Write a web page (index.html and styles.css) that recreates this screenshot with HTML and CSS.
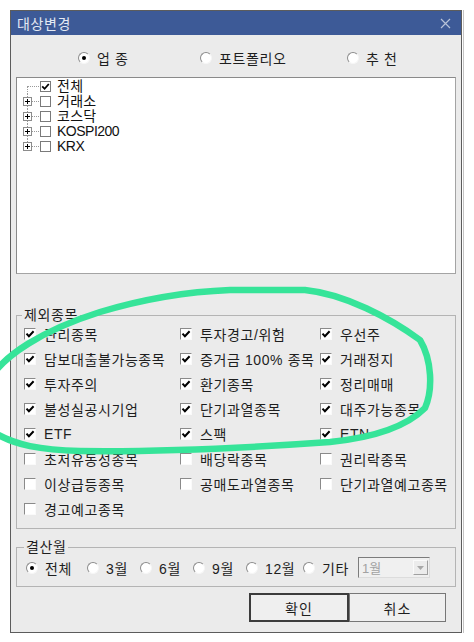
FILE: index.html
```html
<!DOCTYPE html>
<html lang="ko">
<head>
    <meta charset="UTF-8">
    <title>대상변경</title>
    <link rel="stylesheet" href="styles.css">
</head>
<body>

    <div class="screen">
        <!-- Dialog -->
        <div class="dialog">
            <div class="titlebar">
                <span class="title">대상변경</span>
                <svg class="close" width="11" height="11" viewBox="0 0 11 11"><path d="M1 1L10 10M10 1L1 10" stroke="#b7c2d8" stroke-width="1.2" fill="none"/></svg>
            </div>

            <div class="content">
                <!-- Target type -->
                <div class="target-row">
                    <label class="radio-item"><span class="radio checked"></span>업 종</label>
                    <label class="radio-item"><span class="radio"></span>포트폴리오</label>
                    <label class="radio-item"><span class="radio"></span>추 천</label>
                </div>

                <!-- Market tree -->
                <ul class="tree">
                    <li class="node root">
                        <span class="branch"></span>
                        <span class="tree-box"><svg width="9" height="9" viewBox="0 0 9 9"><path d="M1.2 4.4L3.6 6.8L7.8 2" stroke="#000" stroke-width="1.8" fill="none"/></svg></span>
                        <span class="node-label">전체</span>
                    </li>
                    <li class="node">
                        <span class="branch"><span class="expander"><svg width="7" height="7" viewBox="0 0 7 7"><path d="M1 3.5H6M3.5 1V6" stroke="#000" stroke-width="1" fill="none"/></svg></span></span>
                        <span class="tree-box"></span>
                        <span class="node-label">거래소</span>
                    </li>
                    <li class="node">
                        <span class="branch"><span class="expander"><svg width="7" height="7" viewBox="0 0 7 7"><path d="M1 3.5H6M3.5 1V6" stroke="#000" stroke-width="1" fill="none"/></svg></span></span>
                        <span class="tree-box"></span>
                        <span class="node-label">코스닥</span>
                    </li>
                    <li class="node">
                        <span class="branch"><span class="expander"><svg width="7" height="7" viewBox="0 0 7 7"><path d="M1 3.5H6M3.5 1V6" stroke="#000" stroke-width="1" fill="none"/></svg></span></span>
                        <span class="tree-box"></span>
                        <span class="node-label latin">KOSPI200</span>
                    </li>
                    <li class="node last">
                        <span class="branch"><span class="expander"><svg width="7" height="7" viewBox="0 0 7 7"><path d="M1 3.5H6M3.5 1V6" stroke="#000" stroke-width="1" fill="none"/></svg></span></span>
                        <span class="tree-box"></span>
                        <span class="node-label latin">KRX</span>
                    </li>
                </ul>

                <!-- Excluded items -->
                <fieldset class="group exclude">
                    <legend>제외종목</legend>
                    <div class="check-grid">
                        <label class="check-item"><span class="check on"></span>관리종목</label>
                        <label class="check-item"><span class="check on"></span>투자경고/위험</label>
                        <label class="check-item"><span class="check on"></span>우선주</label>

                        <label class="check-item"><span class="check on"></span>담보대출불가능종목</label>
                        <label class="check-item"><span class="check on"></span>증거금 100% 종목</label>
                        <label class="check-item"><span class="check on"></span>거래정지</label>

                        <label class="check-item"><span class="check on"></span>투자주의</label>
                        <label class="check-item"><span class="check on"></span>환기종목</label>
                        <label class="check-item"><span class="check on"></span>정리매매</label>

                        <label class="check-item"><span class="check on"></span>불성실공시기업</label>
                        <label class="check-item"><span class="check on"></span>단기과열종목</label>
                        <label class="check-item"><span class="check on"></span>대주가능종목</label>

                        <label class="check-item"><span class="check on"></span>ETF</label>
                        <label class="check-item"><span class="check on"></span>스팩</label>
                        <label class="check-item"><span class="check on"></span>ETN</label>

                        <label class="check-item"><span class="check"></span>초저유동성종목</label>
                        <label class="check-item"><span class="check"></span>배당락종목</label>
                        <label class="check-item"><span class="check"></span>권리락종목</label>

                        <label class="check-item"><span class="check"></span>이상급등종목</label>
                        <label class="check-item"><span class="check"></span>공매도과열종목</label>
                        <label class="check-item"><span class="check"></span>단기과열예고종목</label>

                        <label class="check-item"><span class="check"></span>경고예고종목</label>
                    </div>
                </fieldset>

                <!-- Settlement month -->
                <fieldset class="group month">
                    <legend>결산월</legend>
                    <div class="month-row">
                        <label class="radio-item"><span class="radio checked"></span>전체</label>
                        <label class="radio-item"><span class="radio"></span>3월</label>
                        <label class="radio-item"><span class="radio"></span>6월</label>
                        <label class="radio-item"><span class="radio"></span>9월</label>
                        <label class="radio-item"><span class="radio"></span>12월</label>
                        <label class="radio-item"><span class="radio"></span>기타</label>
                        <div class="combo">
                            <span class="combo-text">1월</span>
                            <span class="combo-btn"><svg width="7" height="4" viewBox="0 0 7 4"><path d="M0 0H7L3.5 4Z" fill="#a8a8a8"/></svg></span>
                        </div>
                    </div>
                </fieldset>

                <!-- Buttons -->
                <div class="buttons">
                    <button class="btn default">확인</button>
                    <button class="btn">취소</button>
                </div>
            </div>
        </div>
        <div class="edge"></div>
    </div>

    <!-- Hand-drawn highlight -->
    <svg class="annotation" width="474" height="642" viewBox="0 0 474 642">
        <path d="M-8 376 C5 356 40 331 100 312 C140 300 180 292 230 290 L305 290 C345 294 390 318 420 340 C432 360 433 390 425 408 C405 428 370 438 330 442 C260 447 160 452 80 451 C40 450 15 445 -5 433" stroke="#36e499" stroke-width="6.5" fill="none" stroke-linecap="round" stroke-linejoin="round"/>
    </svg>

</body>
</html>
```

FILE: styles.css
```css
/* Global Styles */
body {
    margin: 0;
    padding: 0;
    background-color: #fff;
    font-family: "Liberation Sans", "Noto Sans CJK KR", sans-serif;
    font-size: 14px;
    color: #1e1e1e;
}

.screen {
    display: flex;
    padding: 10px 0 0 10px;
}

.edge {
    width: 1px;
    height: 623px;
    margin-left: 1px;
    background-color: #c4c4c4;
}

/* Dialog frame */
.dialog {
    width: 450px;
    height: 621px;
    border: 1px solid #5c5c5c;
    background-color: #ebebeb;
    display: flex;
    flex-direction: column;
}

.titlebar {
    height: 24px;
    background-color: #3d5a97;
    display: flex;
    align-items: center;
    justify-content: space-between;
    padding: 0 10px 0 6px;
}

.title {
    color: #e4e9f3;
    font-size: 14px;
    letter-spacing: 0.6px;
}

.close {
    margin-top: 1px;
}

.content {
    padding: 13px 5px 0 5px;
}

/* Radio buttons */
.target-row {
    display: grid;
    grid-template-columns: 122px 147px 1fr;
    height: 20px;
    padding-left: 62px;
}

.radio-item {
    display: flex;
    align-items: center;
    gap: 7px;
    letter-spacing: 0.6px;
    white-space: nowrap;
}

.radio {
    width: 10px;
    height: 10px;
    flex: none;
    border-radius: 50%;
    background-color: #fff;
    border: 1px solid;
    border-color: #8c8c8c #f6f6f6 #f6f6f6 #8c8c8c;
    display: flex;
    align-items: center;
    justify-content: center;
}

.radio.checked::after {
    content: "";
    width: 4px;
    height: 4px;
    border-radius: 50%;
    background-color: #000;
}

/* Tree */
.tree {
    list-style: none;
    margin: 9px 0 0 0;
    padding: 1px 0 0 0;
    height: 194px;
    background-color: #fff;
    border: 1px solid #a4a4a4;
    border-top-color: #8a8a8a;
    border-left-color: #8a8a8a;
}

.node {
    display: flex;
    align-items: center;
    height: 15px;
}

.branch {
    position: relative;
    width: 23px;
    height: 15px;
    flex: none;
}

.branch::before {
    content: "";
    position: absolute;
    left: 10px;
    right: 1px;
    top: 7px;
    border-top: 1px dotted #9a9a9a;
}

.branch::after {
    content: "";
    position: absolute;
    left: 10px;
    top: 0;
    bottom: 0;
    border-left: 1px dotted #9a9a9a;
}

.node.root .branch::after {
    top: 7px;
}

.node.last .branch::after {
    bottom: 8px;
}

.expander {
    position: absolute;
    left: 6px;
    top: 3px;
    width: 7px;
    height: 7px;
    border: 1px solid #8c8c8c;
    background-color: #fff;
    display: flex;
    z-index: 1;
}

.tree-box {
    width: 9px;
    height: 9px;
    flex: none;
    border: 1px solid #7a7a7a;
    background-color: #fff;
    display: flex;
}

.node-label {
    margin-left: 6px;
    font-size: 14px;
    letter-spacing: 0.3px;
    line-height: 15px;
    color: #111;
}

.node-label.latin {
    letter-spacing: -0.5px;
}

/* Group boxes */
.group {
    margin: 0;
    padding: 0;
    border: 1px solid #b4b4b4;
    min-inline-size: 0;
}

.group legend {
    padding: 0 2px;
    margin-left: -2px;
    line-height: 12px;
    letter-spacing: 0.6px;
    color: #1e1e1e;
}

.exclude {
    margin-top: 35px;
    padding: 0 0 7px 7px;
}

.check-grid {
    display: grid;
    grid-template-columns: 156px 140px 1fr;
    grid-auto-rows: 25px;
}

.check-item {
    display: flex;
    align-items: center;
    gap: 8px;
    letter-spacing: 0.6px;
    white-space: nowrap;
}

.check {
    width: 10px;
    height: 10px;
    flex: none;
    background-color: #fff;
    border: 1px solid;
    border-color: #8a8a8a #fafafa #fafafa #8a8a8a;
}

.check.on {
    background: #fff url("data:image/svg+xml,%3Csvg xmlns='http://www.w3.org/2000/svg' width='10' height='10' viewBox='0 0 10 10'%3E%3Cpath d='M1.5 4.6L3.9 7.2L8.6 2.2' stroke='%23000' stroke-width='2' fill='none'/%3E%3C/svg%3E") no-repeat center;
}

.month {
    margin-top: 12px;
    padding: 4px 0 8px 9px;
}

.month-row {
    display: grid;
    grid-template-columns: 61px 53px 53px 53px 57px 55px 72px;
    height: 21px;
    align-items: center;
}

.combo {
    height: 19px;
    display: flex;
    align-items: center;
    justify-content: space-between;
    background-color: #f0f0f0;
    border: 1px solid;
    border-color: #7c7c7c #dcdcdc #dcdcdc #7c7c7c;
    padding: 0 1px 0 3px;
}

.combo-text {
    color: #a2a2a2;
    font-size: 13px;
}

.combo-btn {
    width: 15px;
    height: 15px;
    display: flex;
    align-items: center;
    justify-content: center;
    background-color: #ececec;
    border: 1px solid;
    border-color: #fafafa #a0a0a0 #a0a0a0 #fafafa;
    box-sizing: border-box;
}

/* Buttons */
.buttons {
    display: flex;
    justify-content: flex-end;
    margin-top: 6px;
    padding-right: 10px;
}

.btn {
    height: 29px;
    background-color: #efefef;
    font-family: "Liberation Sans", "Noto Sans CJK KR", sans-serif;
    font-size: 14px;
    letter-spacing: 1px;
    color: #1e1e1e;
    border: 1px solid #777;
    padding: 0;
    width: 97px;
}

.btn.default {
    width: 100px;
    border: 2px solid #3c3c3c;
}

/* Annotation */
.annotation {
    position: absolute;
    top: 0;
    left: 0;
    pointer-events: none;
}
```
